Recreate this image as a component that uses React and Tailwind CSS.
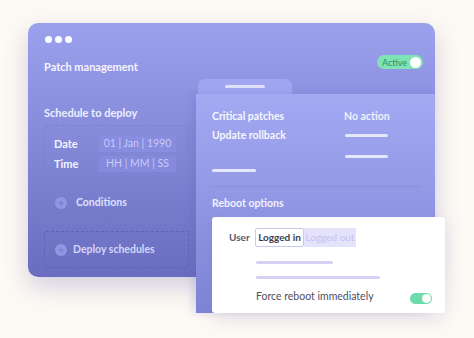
export default function App() {
  const font = { fontFamily: 'Lato, "Noto Sans", sans-serif' };

  return (
    <div className="w-[474px] h-[338px] bg-[#fdf9f4] pt-[23px] pl-[28px] overflow-hidden" style={font}>
      {/* Main card */}
      <div className="w-[407px] h-[254px] rounded-[10px] bg-gradient-to-b from-[#9ca1ee] to-[#6a6dbf] shadow-[0_10px_24px_rgba(100,100,170,0.28)] flex flex-col">
        {/* Header */}
        <div className="pt-[13px] pl-[17px] pr-[12px]">
          <div className="flex gap-[3px]">
            <span className="w-[7px] h-[7px] rounded-full bg-white" />
            <span className="w-[7px] h-[7px] rounded-full bg-white" />
            <span className="w-[7px] h-[7px] rounded-full bg-white" />
          </div>
          <div className="flex items-start justify-between mt-[12px]">
            <span className="mt-[5px] -ml-[1px] text-[11px] font-bold text-[#f5f5ff] leading-[14px]">Patch management</span>
            <div className="h-[14px] w-[46px] rounded-full bg-[#80e3b6] flex items-center justify-between pl-[5px] pr-[2px]">
              <span className="text-[9px] leading-none text-[#2d8f63]">Active</span>
              <span className="w-[11px] h-[11px] rounded-full bg-white" />
            </div>
          </div>
        </div>

        {/* Body */}
        <div className="flex flex-1 mt-[5px]">
          {/* Left column */}
          <div className="w-[168px] shrink-0 pl-[16px] pt-[27px]">
            <div className="text-[11px] font-bold text-[#eef0ff] leading-[14px]">Schedule to deploy</div>
            <div className="mt-[5px] w-[145px] h-[96px] border border-dashed border-[#7a7ecf] rounded-[2px] pl-[9px] pt-[10px]">
              <div className="flex items-center h-[16px]">
                <span className="w-[45px] text-[11px] font-bold text-[#f3f4ff]">Date</span>
                <span className="w-[77px] h-[16px] bg-[#898de0] text-[10.5px] text-[#c8cbf7] flex items-center justify-center whitespace-nowrap">01 | Jan | 1990</span>
              </div>
              <div className="flex items-center h-[16px] mt-[4px]">
                <span className="w-[45px] text-[11px] font-bold text-[#f3f4ff]">Time</span>
                <span className="w-[77px] h-[16px] bg-[#858adc] text-[10.5px] text-[#c8cbf7] flex items-center justify-center whitespace-nowrap">HH | MM | SS</span>
              </div>
              <div className="flex items-center mt-[23px] pl-[1px]">
                <PlusCircle />
                <span className="ml-[9px] text-[10.5px] font-bold text-[#dfe1ff]">Conditions</span>
              </div>
            </div>
            <div className="mt-[10px] w-[145px] h-[37px] border border-dashed border-[#5f63b8] rounded-[2px] pl-[10px] flex items-center">
              <PlusCircle />
              <span className="ml-[6px] text-[10.5px] font-bold text-[#d3d6fb]">Deploy schedules</span>
            </div>
          </div>

          {/* Right panel */}
          <div className="flex-1 flex flex-col">
            <div className="ml-[2px] w-[94px] h-[15px] rounded-t-[7px] bg-[#a0a5f0] flex items-center justify-center">
              <span className="w-[40px] h-[3px] rounded-full bg-[#dfe1fc]" />
            </div>
            <div className="flex-1 bg-gradient-to-b from-[#a4a9f2] to-[#7f84d6] rounded-br-[10px] shadow-[-4px_0_8px_rgba(90,90,170,0.18)] pl-[16px] pr-[15px] pt-[15px]">
              <div className="flex">
                <div className="w-[132px]">
                  <div className="text-[10.5px] font-bold text-[#f5f6ff] leading-[14px]">Critical patches</div>
                  <div className="text-[10.5px] font-bold text-[#f5f6ff] leading-[14px] mt-[5px]">Update rollback</div>
                  <div className="mt-[27px] w-[44px] h-[3px] rounded-full bg-[#e6e7fd]" />
                </div>
                <div>
                  <div className="text-[10.5px] font-bold text-[#eef0ff] leading-[14px]">No action</div>
                  <div className="mt-[11px] ml-[1px] w-[43px] h-[3px] rounded-full bg-[#e6e7fd]" />
                  <div className="mt-[18px] ml-[1px] w-[43px] h-[3px] rounded-full bg-[#e6e7fd]" />
                </div>
              </div>
              <div className="mt-[14px] h-px bg-[#8a8fdc]" />
              <div className="mt-[9px] text-[10.5px] font-bold text-[#f0f1ff] leading-[14px]">Reboot options</div>

              {/* Overlay card */}
              <div className="mt-[7px] -mr-[25px] h-[96px] bg-white rounded-[3px] shadow-[0_6px_18px_rgba(120,110,170,0.18)] pl-[17px] pr-[13px] pt-[11px]">
                <div className="flex items-center">
                  <span className="w-[26px] text-[10px] font-bold text-[#5a5a6e]">User</span>
                  <div className="flex h-[19px]">
                    <span className="w-[49px] h-[19px] border border-[#c9c8ee] bg-white rounded-[2px] text-[10px] font-bold text-[#3c3c50] flex items-center justify-center whitespace-nowrap">Logged in</span>
                    <span className="w-[52px] h-[19px] bg-[#e4e3fb] text-[10px] text-[#c4c2f2] flex items-center justify-center whitespace-nowrap">Logged out</span>
                  </div>
                </div>
                <div className="ml-[27px] mt-[14px] w-[77px] h-[3px] rounded-full bg-[#d4d2f4]" />
                <div className="ml-[27px] mt-[12px] w-[124px] h-[3px] rounded-full bg-[#d4d2f4]" />
                <div className="flex items-center justify-between ml-[27px] mt-[10px]">
                  <span className="text-[10.5px] text-[#4f4f5f]">Force reboot immediately</span>
                  <span className="w-[22px] h-[11px] rounded-full bg-[#6ddcab] flex items-center justify-end pr-[1px] mt-[4px]">
                    <span className="w-[9px] h-[9px] rounded-full bg-white" />
                  </span>
                </div>
              </div>
            </div>
          </div>
        </div>
      </div>
    </div>
  );
}

function PlusCircle() {
  return (
    <svg width="12" height="12" viewBox="0 0 12 12">
      <circle cx="6" cy="6" r="6" fill="#9297e4" />
      <path d="M6 3.5v5M3.5 6h5" stroke="#7a7ed2" strokeWidth="1.2" strokeLinecap="round" />
    </svg>
  );
}
